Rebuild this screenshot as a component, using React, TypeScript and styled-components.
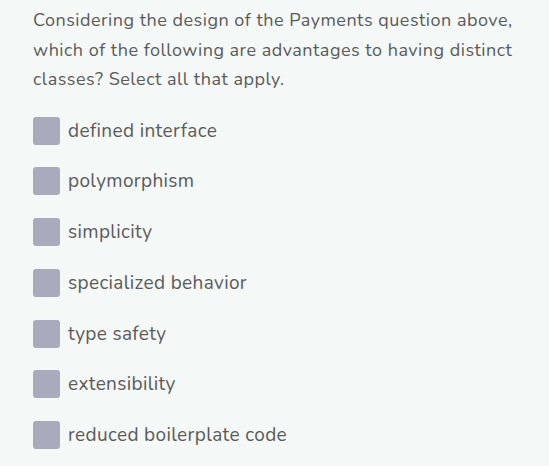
import React from "react";
import styled, { createGlobalStyle } from "styled-components";

const GlobalStyle = createGlobalStyle`
  html, body {
    margin: 0;
    padding: 0;
    background-color: #f4f8f6;
  }
  body {
    font-family: "Nunito", Lato, "Open Sans", sans-serif;
  }
`;

const Container = styled.div`
  padding: 6px 12px 0 33px;
  color: #5b5b5b;
`;

const Question = styled.p`
  margin: 0;
  font-size: 18px;
  line-height: 29.5px;
  letter-spacing: 0.5px;
`;

const OptionList = styled.div`
  display: flex;
  flex-direction: column;
  gap: 22.8px;
  margin-top: 22px;
`;

const Option = styled.label`
  display: flex;
  align-items: center;
  gap: 8px;
  cursor: pointer;
`;

const Box = styled.span`
  width: 27px;
  height: 28px;
  border-radius: 3px;
  background-color: #a9abbd;
  flex-shrink: 0;
`;

const Label = styled.span`
  font-size: 19px;
  line-height: 28px;
  letter-spacing: 0.36px;
`;

const options = [
  "defined interface",
  "polymorphism",
  "simplicity",
  "specialized behavior",
  "type safety",
  "extensibility",
  "reduced boilerplate code",
];

export default function App() {
  return (
    <>
      <GlobalStyle />
      <Container>
        <Question>
          Considering the design of the Payments question above, which of the
          following are advantages to having distinct classes? Select all that
          apply.
        </Question>
        <OptionList>
          {options.map((o) => (
            <Option key={o}>
              <Box />
              <Label>{o}</Label>
            </Option>
          ))}
        </OptionList>
      </Container>
    </>
  );
}
